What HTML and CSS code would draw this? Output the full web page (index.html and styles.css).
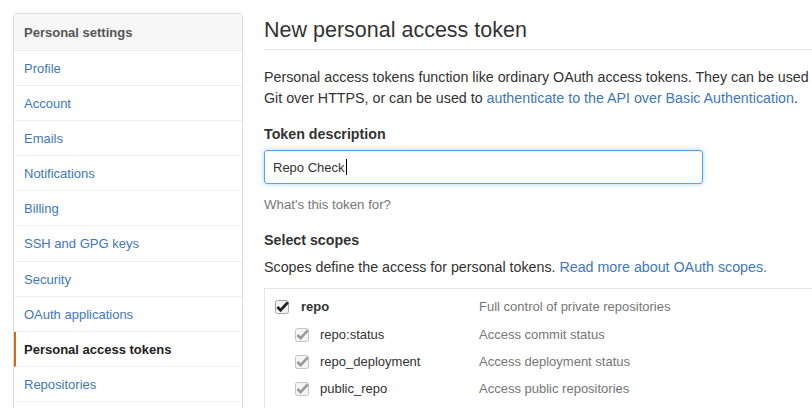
FILE: index.html
```html
<!DOCTYPE html>
<html>
<head>
<meta charset="utf-8">
<link rel="stylesheet" href="styles.css">
</head>
<body>
<div class="page">
  <nav class="menu">
    <div class="menu-heading">Personal settings</div>
    <a class="menu-item" href="#">Profile</a>
    <a class="menu-item" href="#">Account</a>
    <a class="menu-item" href="#">Emails</a>
    <a class="menu-item" href="#">Notifications</a>
    <a class="menu-item" href="#">Billing</a>
    <a class="menu-item" href="#">SSH and GPG keys</a>
    <a class="menu-item" href="#">Security</a>
    <a class="menu-item" href="#">OAuth applications</a>
    <a class="menu-item selected" href="#">Personal access tokens</a>
    <a class="menu-item" href="#">Repositories</a>
    <a class="menu-item" href="#">Organizations</a>
  </nav>
  <main class="main">
    <h2 class="subhead">New personal access token</h2>
    <p class="intro">Personal access tokens function like ordinary OAuth access tokens. They can be used instead of a password for Git over HTTPS, or can be used to <a href="#">authenticate to the API over Basic Authentication</a>.</p>
    <dl class="form-group">
      <dt class="label">Token description</dt>
      <dd><div class="input"><span class="value">Repo Check</span><span class="caret"></span></div></dd>
      <dd class="note">What's this token for?</dd>
    </dl>
    <h3 class="label scopes-title">Select scopes</h3>
    <p class="scopes-text">Scopes define the access for personal tokens. <a href="#">Read more about OAuth scopes.</a></p>
    <div class="scopes">
      <div class="scope parent">
        <span class="cb"><svg viewBox="0 0 14 14" width="14" height="14"><rect x="0.5" y="0.5" width="13" height="13" rx="2" fill="#f2f2f2" stroke="#a6a6a6"/><path d="M2.4 7 L5.6 10.2 L12.8 2.4" fill="none" stroke="#222" stroke-width="2.8"/></svg></span>
        <span class="scope-name">repo</span>
        <span class="scope-desc">Full control of private repositories</span>
      </div>
      <div class="scope child">
        <span class="cb"><svg viewBox="0 0 14 14" width="14" height="14"><rect x="0.5" y="0.5" width="13" height="13" rx="2" fill="#f4f4f4" stroke="#c4c4c4"/><path d="M2.4 7 L5.6 10.2 L12.8 2.4" fill="none" stroke="#9a9a9a" stroke-width="2.6"/></svg></span>
        <span class="scope-name">repo:status</span>
        <span class="scope-desc">Access commit status</span>
      </div>
      <div class="scope child">
        <span class="cb"><svg viewBox="0 0 14 14" width="14" height="14"><rect x="0.5" y="0.5" width="13" height="13" rx="2" fill="#f4f4f4" stroke="#c4c4c4"/><path d="M2.4 7 L5.6 10.2 L12.8 2.4" fill="none" stroke="#9a9a9a" stroke-width="2.6"/></svg></span>
        <span class="scope-name">repo_deployment</span>
        <span class="scope-desc">Access deployment status</span>
      </div>
      <div class="scope child">
        <span class="cb"><svg viewBox="0 0 14 14" width="14" height="14"><rect x="0.5" y="0.5" width="13" height="13" rx="2" fill="#f4f4f4" stroke="#c4c4c4"/><path d="M2.4 7 L5.6 10.2 L12.8 2.4" fill="none" stroke="#9a9a9a" stroke-width="2.6"/></svg></span>
        <span class="scope-name">public_repo</span>
        <span class="scope-desc">Access public repositories</span>
      </div>
    </div>
  </main>
</div>
</body>
</html>
```
FILE: styles.css
```css
html, body {
  margin: 0;
  padding: 0;
  background: #fff;
  overflow: hidden;
}
body {
  font-family: "Liberation Sans", Arial, sans-serif;
  font-size: 14px;
  color: #333;
  width: 812px;
  height: 408px;
}
a { color: #4078c0; text-decoration: none; }
.page {
  display: flex;
  align-items: flex-start;
  gap: 21px;
  padding: 13px 0 0 13px;
  width: 1000px;
}
.menu {
  flex: 0 0 228px;
  border: 1px solid #ddd;
  border-radius: 3px;
  display: flex;
  flex-direction: column;
}
.menu-heading {
  background: #f7f7f7;
  color: #555;
  font-weight: bold;
  font-size: 13px;
  line-height: 17px;
  padding: 10px 10px 9px;
  border-bottom: 1px solid #eee;
}
.menu-item {
  display: block;
  font-size: 13px;
  line-height: 17.1px;
  padding: 9px 10px 8px 8px;
  border-bottom: 1px solid #eee;
  border-left: 2px solid transparent;
}
.menu-item.selected {
  border-left-color: #d26911;
  color: #222;
  font-weight: bold;
}
.main {
  flex: 0 0 712px;
}
.subhead {
  margin: 0;
  font-weight: normal;
  font-size: 21.5px;
  line-height: 30px;
  padding: 2px 0 4px;
  border-bottom: 1px solid #e5e5e5;
}
.intro {
  margin: 17px 0 0;
  line-height: 21px;
  font-size: 14.25px;
}
.form-group { margin: 15px 0 0; }
.form-group dd { margin: 0; }
.label {
  margin: 0;
  font-weight: bold;
  font-size: 14.25px;
  line-height: 20px;
}
.input {
  margin-top: 6px;
  width: 429px;
  height: 32px;
  border: 1px solid #51a7e8;
  border-radius: 3px;
  box-shadow: inset 0 1px 2px rgba(0,0,0,0.075), 0 0 5px rgba(81,167,232,0.5);
  display: flex;
  align-items: center;
  padding-left: 8px;
  box-sizing: content-box;
  font-size: 13px;
}
.value { color: #333; }
.caret {
  width: 1px;
  height: 16px;
  background: #000;
  margin-left: 1px;
}
.note {
  margin-top: 12px !important;
  font-size: 13.25px;
  color: #767676;
  line-height: 18px;
}
.scopes-title { margin-top: 16px; }
.scopes-text { margin: 7px 0 0; line-height: 20px; font-size: 14.25px; }
.scopes {
  margin-top: 11px;
  border: 1px solid #e5e5e5;
  padding: 3px 10px 8px;
  width: 700px;
}
.scope {
  display: flex;
  align-items: center;
  height: 27px;
  font-size: 13px;
}
.scope.parent { height: 29px; }
.scope .cb { display: flex; width: 26px; }
.scope-name { width: 178px; }
.parent .scope-name { font-weight: bold; color: #333; }
.child { padding-left: 20px; }
.child .scope-name { width: 159px; }
.child .cb { width: 25px; }
.scope-desc { color: #767676; }
```
